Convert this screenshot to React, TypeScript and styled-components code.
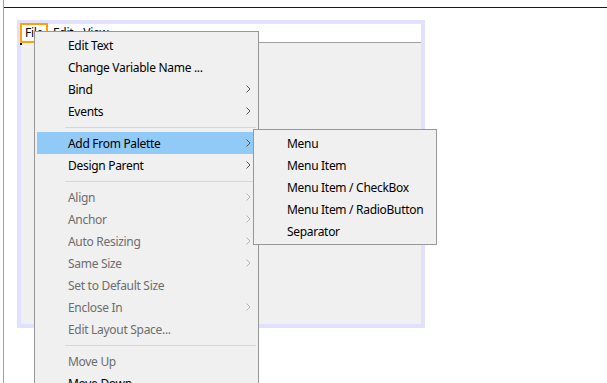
import React from "react";
import styled, { createGlobalStyle } from "styled-components";

const Global = createGlobalStyle`
  html, body { margin: 0; padding: 0; background: #ffffff; }
  body { font-family: "Noto Sans", "Open Sans", sans-serif; font-size: 12px; letter-spacing: -0.3px; }
  * { box-sizing: border-box; }
`;

const Shell = styled.div`
  position: relative;
  width: 607px;
  height: 383px;
  overflow: hidden;
  background: #fdfdfd;
  padding-left: 3px;
`;

const Window = styled.div`
  height: 100%;
  border-left: 1px solid #a0a0a0;
  background: #ffffff;
  display: flex;
  flex-direction: column;
`;

const TopRule = styled.div`
  height: 8px;
  border-bottom: 1px solid #1a1a1a;
  flex: none;
`;

const Frame = styled.div`
  margin: 12px 0 0 13px;
  width: 408px;
  height: 308px;
  border: 4px solid #e1e1ff;
  display: flex;
  flex-direction: column;
`;

const MenuBar = styled.div`
  height: 19px;
  background: #ffffff;
  border-bottom: 1px solid #a0a0a0;
  display: flex;
  align-items: center;
  padding-left: 4px;
  flex: none;
`;

const BarItem = styled.span`
  color: #000;
  padding: 0 5px 0 0;
  margin-right: 5px;
  line-height: 16px;
`;

const Body = styled.div`
  flex: 1;
  background: #f0f0f0;
`;

const Selection = styled.div`
  position: absolute;
  left: 20px;
  top: 23px;
  width: 28px;
  height: 20px;
  border: 2px solid #ffa200;
`;

const Handle = styled.div`
  position: absolute;
  left: 20px;
  top: 43px;
  width: 2px;
  height: 2px;
  background: #000;
`;

const Menu = styled.div<{ $left: number; $top: number; $width: number }>`
  position: absolute;
  left: ${(p) => p.$left}px;
  top: ${(p) => p.$top}px;
  width: ${(p) => p.$width}px;
  background: #f0f0f0;
  border: 1px solid #979797;
  padding: 2px;
  display: flex;
  flex-direction: column;
`;

const Item = styled.div<{ $disabled?: boolean; $active?: boolean }>`
  height: 22px;
  display: flex;
  align-items: center;
  padding-left: 31px;
  padding-right: 5px;
  color: ${(p) => (p.$disabled ? "#6d6d6d" : "#000000")};
  background: ${(p) => (p.$active ? "#91c9f7" : "transparent")};
  white-space: nowrap;
`;

const Label = styled.span`
  flex: 1;
`;

const Separator = styled.div`
  height: 10px;
  display: flex;
  align-items: center;
  padding-left: 28px;
  &::after {
    content: "";
    flex: 1;
    height: 1px;
    background: #d7d7d7;
  }
`;

const Chevron = ({ disabled }: { disabled?: boolean }) => (
  <svg width="5" height="8" viewBox="0 0 5 8" style={{ flex: "none" }}>
    <polyline
      points="0.5,0.5 4,4 0.5,7.5"
      fill="none"
      stroke={disabled ? "#b5b5b5" : "#555555"}
      strokeWidth="1"
    />
  </svg>
);

type Entry =
  | { sep: true }
  | { sep?: false; label: string; sub?: boolean; disabled?: boolean; active?: boolean };

const mainItems: Entry[] = [
  { label: "Edit Text" },
  { label: "Change Variable Name ..." },
  { label: "Bind", sub: true },
  { label: "Events", sub: true },
  { sep: true },
  { label: "Add From Palette", sub: true, active: true },
  { label: "Design Parent", sub: true },
  { sep: true },
  { label: "Align", sub: true, disabled: true },
  { label: "Anchor", sub: true, disabled: true },
  { label: "Auto Resizing", sub: true, disabled: true },
  { label: "Same Size", sub: true, disabled: true },
  { label: "Set to Default Size", disabled: true },
  { label: "Enclose In", sub: true, disabled: true },
  { label: "Edit Layout Space...", disabled: true },
  { sep: true },
  { label: "Move Up", disabled: true },
  { label: "Move Down" },
];

const subItems: Entry[] = [
  { label: "Menu" },
  { label: "Menu Item" },
  { label: "Menu Item / CheckBox" },
  { label: "Menu Item / RadioButton" },
  { label: "Separator" },
];

const renderEntries = (entries: Entry[]) =>
  entries.map((e, i) =>
    e.sep ? (
      <Separator key={i} />
    ) : (
      <Item key={i} $disabled={e.disabled} $active={e.active}>
        <Label>{e.label}</Label>
        {e.sub && <Chevron disabled={e.disabled} />}
      </Item>
    )
  );

export default function App() {
  return (
    <>
      <Global />
      <Shell>
        <Window>
          <TopRule />
          <Frame>
            <MenuBar>
              <BarItem>File</BarItem>
              <BarItem>Edit</BarItem>
              <BarItem>View</BarItem>
            </MenuBar>
            <Body />
          </Frame>
        </Window>
        <Selection />
        <Handle />
        <Menu $left={34} $top={31} $width={225}>
          {renderEntries(mainItems)}
        </Menu>
        <Menu $left={253} $top={129} $width={184}>
          {renderEntries(subItems)}
        </Menu>
      </Shell>
    </>
  );
}
